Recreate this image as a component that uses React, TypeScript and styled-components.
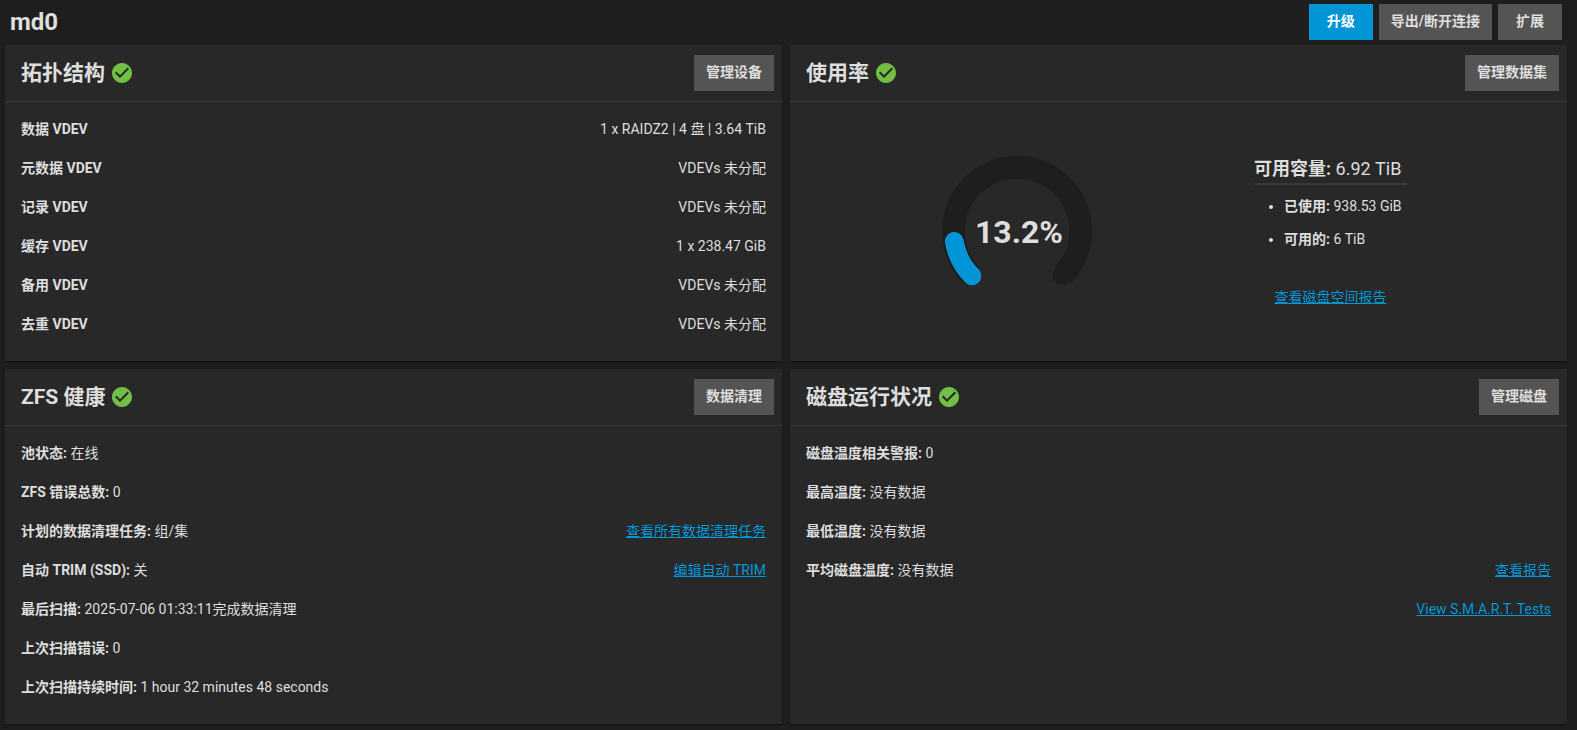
import React from "react";
import styled, { createGlobalStyle } from "styled-components";

const colors = {
  page: "#1e1e1e",
  card: "#282828",
  line: "#383838",
  text: "#dedede",
  button: "#545454",
  primary: "#0095d5",
  green: "#71bf44",
};

const GlobalStyle = createGlobalStyle`
  *, *::before, *::after { box-sizing: border-box; }
  body {
    margin: 0;
    background: ${colors.page};
    color: ${colors.text};
    font-family: Roboto, "Noto Sans CJK SC", sans-serif;
    font-size: 14px;
    line-height: 20px;
  }
`;

const Page = styled.main`
  padding: 4px 10px 6px 5px;
`;

const PageHeader = styled.header`
  display: flex;
  align-items: center;
  justify-content: space-between;
  padding: 0 5px 5px;
`;

const PageTitle = styled.h1`
  margin: 0;
  font-size: 24px;
  line-height: 36px;
  font-weight: 700;
`;

const Actions = styled.div`
  display: flex;
  gap: 6px;
`;

const Button = styled.button<{ $primary?: boolean }>`
  min-width: 64px;
  height: 36px;
  padding: 0 12px 2px;
  border: 0;
  background: ${(p) => (p.$primary ? colors.primary : colors.button)};
  color: ${(p) => (p.$primary ? "#ffffff" : colors.text)};
  font: inherit;
  font-weight: 700;
  cursor: pointer;
`;

const CardGrid = styled.div`
  display: grid;
  grid-template-columns: repeat(2, minmax(0, 1fr));
  gap: 8px;
`;

const CardBox = styled.section`
  display: flex;
  flex-direction: column;
  background: ${colors.card};
  box-shadow: 0 2px 1px -1px rgba(0, 0, 0, 0.2), 0 1px 1px rgba(0, 0, 0, 0.14),
    0 1px 3px rgba(0, 0, 0, 0.12);
`;

const CardHeader = styled.header`
  display: flex;
  align-items: center;
  justify-content: space-between;
  height: 57px;
  padding: 0 8px 0 16px;
  border-bottom: 1px solid ${colors.line};
`;

const CardHeading = styled.div`
  display: flex;
  align-items: center;
  gap: 5px;
`;

const CardTitle = styled.h2`
  margin: 0;
  font-size: 21px;
  line-height: 28px;
  font-weight: 700;
`;

const StatusIcon = styled.svg`
  width: 24px;
  height: 24px;
  fill: ${colors.green};
`;

const List = styled.ul`
  margin: 0;
  padding: 7px 16px 18px;
  list-style: none;
`;

const ListRow = styled.li`
  display: flex;
  align-items: center;
  justify-content: space-between;
  min-height: 39px;
`;

const Strong = styled.strong`
  font-weight: 700;
`;

const Link = styled.a`
  margin-left: auto;
  color: ${colors.primary};
  text-decoration: underline;
`;

const UsageBody = styled.div`
  display: flex;
  flex: 1;
  align-items: center;
  justify-content: space-evenly;
  gap: 10px;
  padding: 8px 8px 9px 0;
`;

const Gauge = styled.svg`
  width: 150px;
  height: 150px;
`;

const GaugeLabel = styled.text`
  fill: ${colors.text};
  font-size: 32px;
  font-weight: 700;
  text-anchor: middle;
`;

const UsageInfo = styled.div`
  display: flex;
  flex-direction: column;
  align-items: center;
  min-width: 153px;
`;

const Capacity = styled.div`
  align-self: stretch;
  border-bottom: 2px solid ${colors.line};
  font-size: 18px;
  line-height: 28px;
`;

const UsageList = styled.ul`
  align-self: stretch;
  margin: 5px 0 31px;
  padding: 0 0 0 30px;
`;

const UsageItem = styled.li`
  line-height: 33px;
`;

const UsageLink = styled.a`
  color: ${colors.primary};
  text-decoration: underline;
`;

function HealthyIcon() {
  return (
    <StatusIcon viewBox="0 0 24 24" role="img" aria-label="OK">
      <path d="M12 2C6.5 2 2 6.5 2 12S6.5 22 12 22 22 17.5 22 12 17.5 2 12 2M10 17L5 12L6.41 10.59L10 14.17L17.59 6.58L19 8L10 17Z" />
    </StatusIcon>
  );
}

interface CardProps {
  title: string;
  action: string;
  children: React.ReactNode;
}

function Card({ title, action, children }: CardProps) {
  return (
    <CardBox>
      <CardHeader>
        <CardHeading>
          <CardTitle>{title}</CardTitle>
          <HealthyIcon />
        </CardHeading>
        <Button type="button">{action}</Button>
      </CardHeader>
      {children}
    </CardBox>
  );
}

interface Detail {
  label?: string;
  value?: string;
  link?: string;
}

function DetailList({ items }: { items: Detail[] }) {
  return (
    <List>
      {items.map((item) => (
        <ListRow key={item.label ?? item.link}>
          {item.label && (
            <span>
              <Strong>{item.label}:</Strong> {item.value}
            </span>
          )}
          {item.link && <Link href="#">{item.link}</Link>}
        </ListRow>
      ))}
    </List>
  );
}

const vdevs = [
  ["数据 VDEV", "1 x RAIDZ2 | 4 盘 | 3.64 TiB"],
  ["元数据 VDEV", "VDEVs 未分配"],
  ["记录 VDEV", "VDEVs 未分配"],
  ["缓存 VDEV", "1 x 238.47 GiB"],
  ["备用 VDEV", "VDEVs 未分配"],
  ["去重 VDEV", "VDEVs 未分配"],
];

const zfsHealth: Detail[] = [
  { label: "池状态", value: "在线" },
  { label: "ZFS 错误总数", value: "0" },
  { label: "计划的数据清理任务", value: "组/集", link: "查看所有数据清理任务" },
  { label: "自动 TRIM (SSD)", value: "关", link: "编辑自动 TRIM" },
  { label: "最后扫描", value: "2025-07-06 01:33:11完成数据清理" },
  { label: "上次扫描错误", value: "0" },
  { label: "上次扫描持续时间", value: "1 hour 32 minutes 48 seconds" },
];

const diskHealth: Detail[] = [
  { label: "磁盘温度相关警报", value: "0" },
  { label: "最高温度", value: "没有数据" },
  { label: "最低温度", value: "没有数据" },
  { label: "平均磁盘温度", value: "没有数据", link: "查看报告" },
  { link: "View S.M.A.R.T. Tests" },
];

/** Point on a circle around the gauge centre; degrees run clockwise from the top. */
function polar(radius: number, degrees: number) {
  const a = (degrees * Math.PI) / 180;
  return `${75 + radius * Math.sin(a)} ${75 - radius * Math.cos(a)}`;
}

function arc(radius: number, from: number, to: number) {
  const large = to - from > 180 ? 1 : 0;
  return `M${polar(radius, from)}A${radius} ${radius} 0 ${large} 1 ${polar(radius, to)}`;
}

function UsageGauge({ percent }: { percent: number }) {
  const end = -135 + (270 * percent) / 100;
  return (
    <Gauge viewBox="0 0 150 150" role="img" aria-label={`${percent}%`}>
      <g fill="none">
        <path d={arc(63.6, -133, 133)} stroke={colors.page} strokeWidth="22.8" />
        <path d={arc(63.6, -135, 135)} stroke={colors.page} strokeWidth="18.7" strokeLinecap="round" />
        <path d={arc(63.6, -135, end)} stroke={colors.primary} strokeWidth="18.7" strokeLinecap="round" />
      </g>
      <GaugeLabel x="77" y="87">{percent}%</GaugeLabel>
    </Gauge>
  );
}

export default function App() {
  return (
    <>
      <GlobalStyle />
      <Page>
        <PageHeader>
          <PageTitle>md0</PageTitle>
          <Actions>
            <Button type="button" $primary>升级</Button>
            <Button type="button">导出/断开连接</Button>
            <Button type="button">扩展</Button>
          </Actions>
        </PageHeader>
        <CardGrid>
          <Card title="拓扑结构" action="管理设备">
            <List>
              {vdevs.map(([label, value]) => (
                <ListRow key={label}>
                  <Strong>{label}</Strong>
                  <span>{value}</span>
                </ListRow>
              ))}
            </List>
          </Card>
          <Card title="使用率" action="管理数据集">
            <UsageBody>
              <UsageGauge percent={13.2} />
              <UsageInfo>
                <Capacity>
                  <Strong>可用容量:</Strong> 6.92 TiB
                </Capacity>
                <UsageList>
                  <UsageItem>
                    <Strong>已使用:</Strong> 938.53 GiB
                  </UsageItem>
                  <UsageItem>
                    <Strong>可用的:</Strong> 6 TiB
                  </UsageItem>
                </UsageList>
                <UsageLink href="#">查看磁盘空间报告</UsageLink>
              </UsageInfo>
            </UsageBody>
          </Card>
          <Card title="ZFS 健康" action="数据清理">
            <DetailList items={zfsHealth} />
          </Card>
          <Card title="磁盘运行状况" action="管理磁盘">
            <DetailList items={diskHealth} />
          </Card>
        </CardGrid>
      </Page>
    </>
  );
}
